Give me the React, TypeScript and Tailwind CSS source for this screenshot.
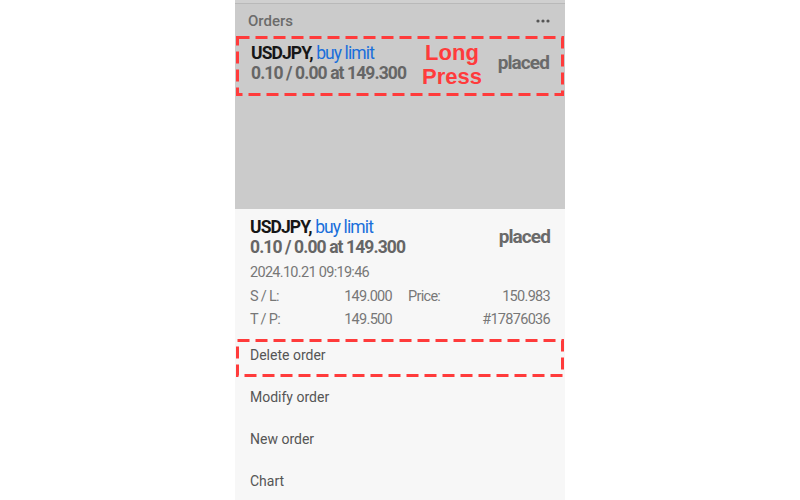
const font = { fontFamily: "Roboto, 'Noto Sans', sans-serif" };

function DashedBox({ className }: { className: string }) {
  return (
    <svg className={`pointer-events-none absolute ${className}`} width="328" height="100%" preserveAspectRatio="none">
      <rect
        x="1.5"
        y="1.5"
        width="325"
        height="calc(100% - 3px)"
        fill="none"
        stroke="#ff3b3b"
        strokeWidth="3"
        strokeDasharray="12 6"
      />
    </svg>
  );
}

function OrderInfo() {
  return (
    <div>
      <div className="text-[17.5px] leading-[20px] tracking-[-0.9px]">
        <span className="font-bold text-[#161616]">USDJPY,</span>{" "}
        <span className="text-[#1a6fdb]">buy limit</span>
      </div>
      <div className="text-[17.5px] font-bold leading-[20px] tracking-[-0.9px] text-[#666]">
        0.10 / 0.00 at 149.300
      </div>
    </div>
  );
}

function DetailRow({ a, b, c, d }: { a: string; b: string; c: string; d: string }) {
  return (
    <div className="flex h-[23px] items-center text-[14.5px] tracking-[-0.7px] text-[#777]">
      <div className="flex w-[142px] justify-between">
        <span>{a}</span>
        <span>{b}</span>
      </div>
      <div className="ml-4 flex flex-1 justify-between">
        <span>{c}</span>
        <span>{d}</span>
      </div>
    </div>
  );
}

export default function App() {
  return (
    <div className="flex h-[500px] w-full justify-center overflow-hidden bg-white" style={font}>
      <div className="flex w-[330px] flex-col">
        <div className="h-[4px] shrink-0 border-b border-[#b9b9b9] bg-[#d0d0d0]" />
        <div className="flex h-[205px] shrink-0 flex-col bg-[#cbcbcb]">
          <div className="flex h-[32px] items-center justify-between pl-[13px] pr-[15px] pt-[2px]">
            <span className="text-[15px] font-medium text-[#6b6b6b]">Orders</span>
            <svg width="14" height="4" viewBox="0 0 14 4">
              <circle cx="2" cy="2" r="1.6" fill="#555" />
              <circle cx="7" cy="2" r="1.6" fill="#555" />
              <circle cx="12" cy="2" r="1.6" fill="#555" />
            </svg>
          </div>
          <div className="relative flex h-[60px] items-center justify-between pb-[6px] pl-[16px] pr-[16px]">
            <DashedBox className="left-[1px] top-0 h-[60px]" />
            <OrderInfo />
            <div
              className="absolute left-[187px] top-[5px] w-[60px] text-center text-[22px] font-bold leading-[24px] text-[#ff3b3b]"
              style={{ fontFamily: "'Liberation Sans', Arial, sans-serif" }}
            >
              Long
              <br />
              Press
            </div>
            <span className="text-[19px] font-bold tracking-[-0.9px] text-[#6a6a6a]">placed</span>
          </div>
        </div>
        <div className="flex flex-1 flex-col bg-[#f7f7f7]">
          <div className="px-[15px] pt-[8px]">
            <div className="flex items-center justify-between">
              <OrderInfo />
              <span className="text-[19px] font-bold tracking-[-0.9px] text-[#6a6a6a]">placed</span>
            </div>
            <div className="mt-[4px] flex h-[24px] items-center text-[14.5px] tracking-[-0.7px] text-[#777]">
              2024.10.21 09:19:46
            </div>
            <DetailRow a="S / L:" b="149.000" c="Price:" d="150.983" />
            <DetailRow a="T / P:" b="149.500" c="" d="#17876036" />
          </div>
          <div className="mt-[3px] flex flex-col text-[14px] text-[#555]">
            <div className="relative flex h-[42px] items-center px-[15px]">
              <DashedBox className="left-[1px] top-[5px] h-[38px]" />
              Delete order
            </div>
            <div className="flex h-[42px] items-center px-[15px]">Modify order</div>
            <div className="flex h-[42px] items-center px-[15px]">New order</div>
            <div className="flex h-[42px] items-center px-[15px]">Chart</div>
          </div>
        </div>
      </div>
    </div>
  );
}
